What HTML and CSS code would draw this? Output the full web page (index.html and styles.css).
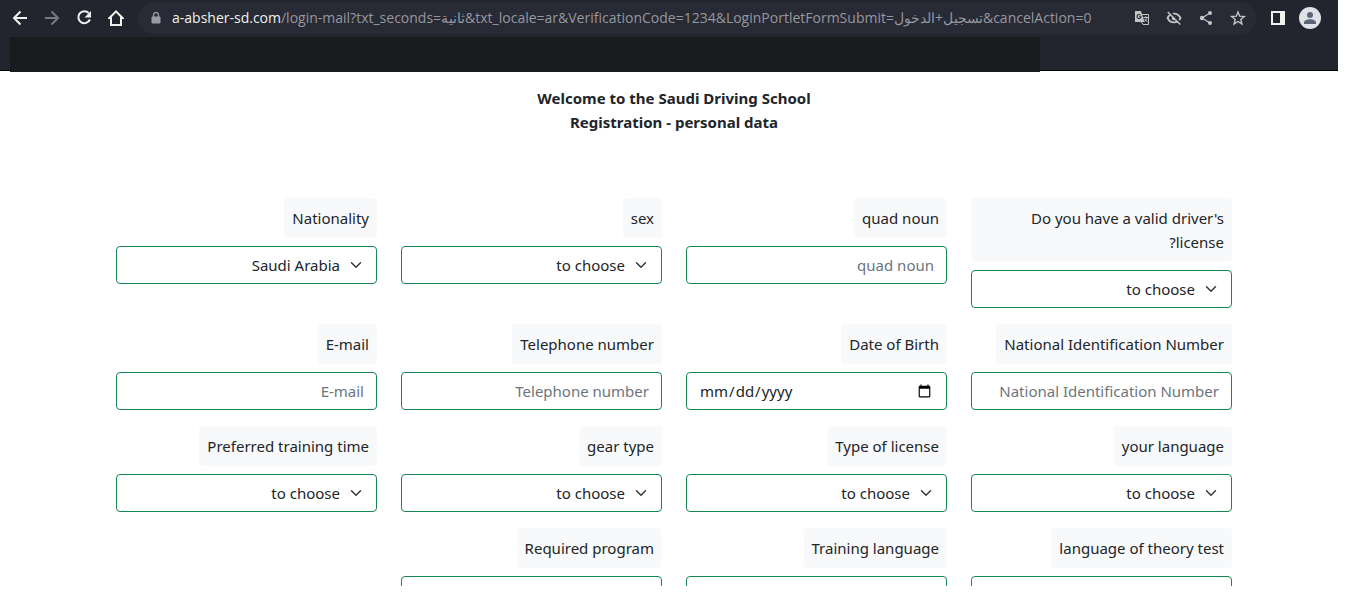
FILE: index.html
```html
<!DOCTYPE html>
<html lang="en">
<head>
	<meta charset="utf-8">
	<title>Saudi Driving School</title>
	<link rel="stylesheet" href="styles.css">
</head>
<body>
	<div class="window">
		<header class="browser">
			<div class="toolbar">
				<button class="tool" type="button" aria-label="Back">
					<svg width="16" height="16" viewBox="0 0 16 16" fill="none" stroke="currentColor" stroke-width="2"><path d="M15 8H2.500M8.500 1.500L2 8l6.500 6.500"/></svg>
				</button>
				<button class="tool off" type="button" aria-label="Forward">
					<svg width="16" height="16" viewBox="0 0 16 16" fill="none" stroke="currentColor" stroke-width="2"><path d="M1 8h12.500M7.500 1.500L14 8l-6.500 6.500"/></svg>
				</button>
				<button class="tool" type="button" aria-label="Reload">
					<svg width="16" height="16" viewBox="0 0 16 16"><path d="M12.800 3.200A6 6 0 1 0 13.900 9.500" fill="none" stroke="currentColor" stroke-width="2"/><path d="M15 1v6.500H8.500z" fill="currentColor"/></svg>
				</button>
				<button class="tool" type="button" aria-label="Home">
					<svg width="16" height="16" viewBox="0 0 16 16" fill="none" stroke="currentColor" stroke-width="2"><path d="M8 1.400L1.500 8H3v7h10V8h1.500z"/></svg>
				</button>
				<div class="address">
					<svg class="lock" width="10" height="12" viewBox="0 0 10 12"><path d="M1 5h8v6H1z" fill="currentColor" stroke="currentColor"/><path d="M2.500 5V3a2.500 2.500 0 0 1 5 0v2" fill="none" stroke="currentColor" stroke-width="1.300"/></svg>
					<label for="url">a-absher-sd.com</label>
					<input class="url" id="url" type="text" value="/login-mail?txt_seconds=ثانية&amp;txt_locale=ar&amp;VerificationCode=1234&amp;LoginPortletFormSubmit=تسجيل+الدخول&amp;cancelAction=0">
					<button class="tool small" type="button" aria-label="Translate">
						<svg width="16" height="16" viewBox="0 0 16 16"><path d="M7 4.500h7.500v10H9L7.500 12" fill="none" stroke="currentColor"/><path d="M1 1h6l3.500 11H1z" fill="currentColor"/><path d="M6.500 5.200A2 2 0 1 0 7 6.800H5" fill="none" stroke="#282a35" stroke-width="1.100"/><path d="M9.500 7.500h4.500M11.700 6.300v1.200M13 7.500c-.3 1.800-1.500 3-2.500 3.800M10.300 8.800l3.200 3.200" fill="none" stroke="currentColor"/></svg>
					</button>
					<button class="tool small" type="button" aria-label="Cookies blocked">
						<svg width="16" height="16" viewBox="0 0 16 16" fill="none" stroke="currentColor"><path d="M1.500 8C3 5 5.300 3.600 8 3.600S13 5 14.500 8C13 11 10.700 12.400 8 12.400S3 11 1.500 8z" stroke-width="1.800"/><circle cx="8" cy="8" r="2.300" fill="currentColor" stroke="none"/><path d="M3.200 1.500l12 12" stroke="#282a35" stroke-width="2"/><path d="M1.800 2l12.500 12.500" stroke-width="1.500"/></svg>
					</button>
					<button class="tool small" type="button" aria-label="Share">
						<svg width="16" height="16" viewBox="0 0 16 16"><path d="M12 3L4 8l8 5" fill="none" stroke="currentColor" stroke-width="1.300"/><g fill="currentColor"><circle cx="12" cy="3" r="2"/><circle cx="4" cy="8" r="2.200"/><circle cx="12" cy="13" r="2"/></g></svg>
					</button>
					<button class="tool small" type="button" aria-label="Bookmark">
						<svg width="16" height="16" viewBox="0 0 16 16" fill="none" stroke="currentColor" stroke-width="1.400"><path d="M8 2l1.700 4.200 4.600.3-3.500 3 1.100 4.400L8 11.500l-3.900 2.400 1.100-4.400-3.500-3 4.600-.3z"/></svg>
					</button>
				</div>
				<button class="tool" type="button" aria-label="Side panel">
					<svg width="14" height="14" viewBox="0 0 14 14"><path d="M0 0h14v14H0zM2 2v10h7V2z" fill="currentColor" fill-rule="evenodd"/></svg>
				</button>
				<button class="tool" type="button" aria-label="Profile">
					<svg width="22" height="22" viewBox="0 0 22 22"><circle cx="11" cy="11" r="11" fill="#dee1e6"/><g fill="#5a6678"><circle cx="11" cy="8" r="3"/><path d="M5 17v-1.500c0-2 3-3.300 6-3.300s6 1.300 6 3.300V17z"/></g></svg>
				</button>
			</div>
			<div class="bookmarks"></div>
		</header>

		<main class="page" dir="rtl">
			<h1>Welcome to the Saudi Driving School<br>Registration - personal data</h1>
			<form class="fields">
				<div class="field">
					<label for="driver">Do you have a valid driver's license?</label>
					<select id="driver"><option>to choose</option></select>
				</div>
				<div class="field">
					<label for="name">quad noun</label>
					<input id="name" type="text" placeholder="quad noun">
				</div>
				<div class="field">
					<label for="sex">sex</label>
					<select id="sex"><option>to choose</option></select>
				</div>
				<div class="field">
					<label for="nationality">Nationality</label>
					<select id="nationality"><option>Saudi Arabia</option></select>
				</div>

				<div class="field">
					<label for="nid">National Identification Number</label>
					<input id="nid" type="text" placeholder="National Identification Number">
				</div>
				<div class="field">
					<label for="birth">Date of Birth</label>
					<input id="birth" type="date" dir="ltr">
				</div>
				<div class="field">
					<label for="phone">Telephone number</label>
					<input id="phone" type="text" placeholder="Telephone number">
				</div>
				<div class="field">
					<label for="email">E-mail</label>
					<input id="email" type="text" placeholder="E-mail">
				</div>

				<div class="field">
					<label for="language">your language</label>
					<select id="language"><option>to choose</option></select>
				</div>
				<div class="field">
					<label for="license">Type of license</label>
					<select id="license"><option>to choose</option></select>
				</div>
				<div class="field">
					<label for="gear">gear type</label>
					<select id="gear"><option>to choose</option></select>
				</div>
				<div class="field">
					<label for="time">Preferred training time</label>
					<select id="time"><option>to choose</option></select>
				</div>

				<div class="field">
					<label for="theory">language of theory test</label>
					<select id="theory"><option>to choose</option></select>
				</div>
				<div class="field">
					<label for="training">Training language</label>
					<select id="training"><option>to choose</option></select>
				</div>
				<div class="field">
					<label for="program">Required program</label>
					<select id="program"><option>to choose</option></select>
				</div>
			</form>
		</main>
	</div>
</body>
</html>
```
FILE: styles.css
```css
*{
	box-sizing:border-box;
}
body{
	margin:0;
	background:#fff;
	color:#212529;
	font-family:"Noto Sans", "DejaVu Sans", sans-serif;
	font-size:15px;
	line-height:24px;
}
.window{
	height:calc(100vh - 6px);
	overflow:hidden;
}

/* browser bar */
.browser{
	margin-right:27px;
	background:#23252e;
	border-bottom:1px solid #000;
}
.toolbar{
	display:flex;
	align-items:center;
	padding:2px 12px 3px 4px;
}
.tool{
	display:flex;
	align-items:center;
	justify-content:center;
	width:32px;
	height:32px;
	padding:0;
	border:0;
	background:none;
	color:#f1f1ee;
}
.off{
	color:#777980;
}
.small{
	color:#c4c4c4;
}
.address{
	flex:1;
	display:flex;
	align-items:center;
	margin:0 6px;
	padding:0 2px 0 13px;
	border-radius:16px;
	background:#282a35;
	font-family:"Open Sans", "Noto Sans", sans-serif;
	font-size:14px;
}
.lock{
	margin-right:11px;
	color:#9a9ca3;
}
.address label{
	color:#f1f1ee;
}
.url{
	flex:1;
	min-width:0;
	padding:0;
	border:0;
	background:none;
	color:#96989d;
	font:inherit;
}
.bookmarks{
	width:77%;
	height:35px;
	margin:0 0 -2px 10px;
	background:#1a1b1f;
}

/* registration form */
.page{
	margin-right:17px;
	padding-top:15px;
}
h1{
	margin:0 0 64px;
	font-size:15px;
	font-weight:700;
	text-align:center;
}
.fields{
	display:grid;
	grid-template-columns:repeat(4, 1fr);
	gap:16px 24px;
	max-width:1140px;
	margin:0 auto;
	padding:0 12px;
}
.field label{
	display:block;
	width:fit-content;
	margin-bottom:8px;
	padding:8px;
	border-radius:4px;
	background:#f8f9fa;
}
.field input,
.field select{
	display:block;
	width:100%;
	height:38px;
	padding:6px 12px;
	border:1px solid #198754;
	border-radius:4px;
	background:#fff;
	color:#212529;
	font:inherit;
}
.field select{
	appearance:none;
	padding-right:36px;
	background:#fff url("data:image/svg+xml,%3csvg xmlns='http://www.w3.org/2000/svg' viewBox='0 0 16 16'%3e%3cpath fill='none' stroke='%23343a40' stroke-linecap='round' stroke-linejoin='round' stroke-width='2' d='M2 5l6 6 6-6'/%3e%3c/svg%3e") no-repeat right 12px center;
	background-size:16px 12px;
}
.field input::placeholder{
	color:#6c757d;
}
```
